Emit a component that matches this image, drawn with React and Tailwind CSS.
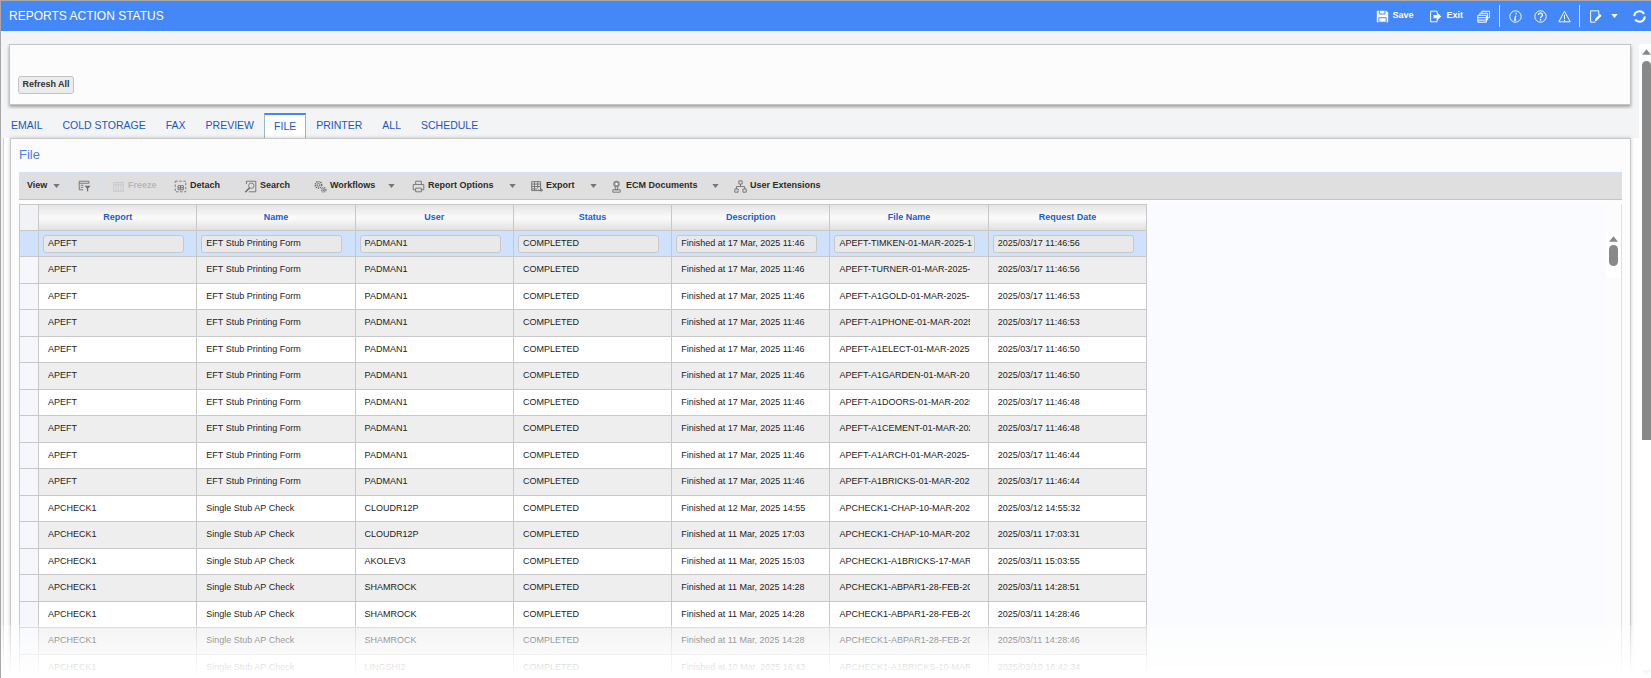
const columns = ['Report', 'Name', 'User', 'Status', 'Description', 'File Name', 'Request Date'];

const APEFT = ['APEFT', 'EFT Stub Printing Form', 'PADMAN1', 'COMPLETED'];
const rows = [
  [...APEFT, 'Finished at 17 Mar, 2025 11:46', 'APEFT-TIMKEN-01-MAR-2025-1', '2025/03/17 11:46:56'],
  [...APEFT, 'Finished at 17 Mar, 2025 11:46', 'APEFT-TURNER-01-MAR-2025-', '2025/03/17 11:46:56'],
  [...APEFT, 'Finished at 17 Mar, 2025 11:46', 'APEFT-A1GOLD-01-MAR-2025-', '2025/03/17 11:46:53'],
  [...APEFT, 'Finished at 17 Mar, 2025 11:46', 'APEFT-A1PHONE-01-MAR-2025', '2025/03/17 11:46:53'],
  [...APEFT, 'Finished at 17 Mar, 2025 11:46', 'APEFT-A1ELECT-01-MAR-2025-', '2025/03/17 11:46:50'],
  [...APEFT, 'Finished at 17 Mar, 2025 11:46', 'APEFT-A1GARDEN-01-MAR-202', '2025/03/17 11:46:50'],
  [...APEFT, 'Finished at 17 Mar, 2025 11:46', 'APEFT-A1DOORS-01-MAR-2025', '2025/03/17 11:46:48'],
  [...APEFT, 'Finished at 17 Mar, 2025 11:46', 'APEFT-A1CEMENT-01-MAR-202', '2025/03/17 11:46:48'],
  [...APEFT, 'Finished at 17 Mar, 2025 11:46', 'APEFT-A1ARCH-01-MAR-2025-', '2025/03/17 11:46:44'],
  [...APEFT, 'Finished at 17 Mar, 2025 11:46', 'APEFT-A1BRICKS-01-MAR-2025', '2025/03/17 11:46:44'],
  ['APCHECK1', 'Single Stub AP Check', 'CLOUDR12P', 'COMPLETED', 'Finished at 12 Mar, 2025 14:55', 'APCHECK1-CHAP-10-MAR-202', '2025/03/12 14:55:32'],
  ['APCHECK1', 'Single Stub AP Check', 'CLOUDR12P', 'COMPLETED', 'Finished at 11 Mar, 2025 17:03', 'APCHECK1-CHAP-10-MAR-202', '2025/03/11 17:03:31'],
  ['APCHECK1', 'Single Stub AP Check', 'AKOLEV3', 'COMPLETED', 'Finished at 11 Mar, 2025 15:03', 'APCHECK1-A1BRICKS-17-MAR', '2025/03/11 15:03:55'],
  ['APCHECK1', 'Single Stub AP Check', 'SHAMROCK', 'COMPLETED', 'Finished at 11 Mar, 2025 14:28', 'APCHECK1-ABPAR1-28-FEB-20', '2025/03/11 14:28:51'],
  ['APCHECK1', 'Single Stub AP Check', 'SHAMROCK', 'COMPLETED', 'Finished at 11 Mar, 2025 14:28', 'APCHECK1-ABPAR1-28-FEB-20', '2025/03/11 14:28:46'],
  ['APCHECK1', 'Single Stub AP Check', 'SHAMROCK', 'COMPLETED', 'Finished at 11 Mar, 2025 14:28', 'APCHECK1-ABPAR1-28-FEB-20', '2025/03/11 14:28:46'],
  ['APCHECK1', 'Single Stub AP Check', 'LINGSHI2', 'COMPLETED', 'Finished at 10 Mar, 2025 16:43', 'APCHECK1-A1BRICKS-10-MAR', '2025/03/10 16:42:34'],
];

const tabs = ['EMAIL', 'COLD STORAGE', 'FAX', 'PREVIEW', 'FILE', 'PRINTER', 'ALL', 'SCHEDULE'];

function Caret({ className = '' }) {
  return (
    <svg width="7" height="4" viewBox="0 0 8 5" className={`shrink-0 ${className}`}>
      <path d="M0 0h8L4 5z" fill="currentColor" />
    </svg>
  );
}

function ToolIcon({ children, dim }) {
  return (
    <svg
      width="13"
      height="13"
      viewBox="0 0 16 16"
      fill="none"
      stroke="currentColor"
      strokeWidth="1.1"
      className={`shrink-0 ${dim ? 'text-[#c8c8c8]' : 'text-[#6e6e6e]'}`}
    >
      {children}
    </svg>
  );
}

function HeadIcon({ children }) {
  return (
    <svg width="13" height="13" viewBox="0 0 16 16" fill="none" stroke="white" strokeWidth="1.2" className="shrink-0">
      {children}
    </svg>
  );
}

function HeaderBar() {
  return (
    <div className="flex h-[30px] items-center justify-between bg-[#4487f6] pl-[8px] pr-[5px] text-white">
      <span className="text-[12px]">REPORTS ACTION STATUS</span>
      <div className="flex items-center">
        <div className="flex items-center gap-[3px] text-[9px] font-bold">
          <HeadIcon>
            <path d="M1 1h11.500L15 3.500V15H1z" fill="white" stroke="none" />
            <path d="M4 1v4h7V1M3.500 9.500h9V15h-9z" stroke="#4487f6" />
          </HeadIcon>
          <span>Save</span>
        </div>
        <div className="ml-[16px] flex items-center gap-[4px] text-[9px] font-bold">
          <HeadIcon>
            <path d="M10 5V1.500H2v13h8V11" />
            <path d="M5.500 6h4.500V3l5 5-5 5v-3H5.500z" fill="white" stroke="none" />
          </HeadIcon>
          <span>Exit</span>
        </div>
        <div className="ml-[14px]">
          <HeadIcon>
            <path d="M1 6.500h10.500V15H1zM1 9.500h10.500M1 12.500h10.500M3.500 6.500V4H13v8h-1.500M6 4V1.500h9.500V9.500H13" />
          </HeadIcon>
        </div>
        <div className="ml-[9px] h-[22px] w-px bg-white/80" />
        <div className="ml-[9px]">
          <HeadIcon>
            <circle cx="8" cy="8" r="7" />
            <path d="M8.800 3.500v1.800M8.300 6.800l-1.300 5.500h1.800" strokeWidth="1.600" />
          </HeadIcon>
        </div>
        <div className="ml-[12px]">
          <HeadIcon>
            <circle cx="8" cy="8" r="7" />
            <path d="M5.500 6.200c0-3.200 5-3.200 5 0 0 2-2.500 1.800-2.500 3.800M8 11v1.800" strokeWidth="1.600" />
          </HeadIcon>
        </div>
        <div className="ml-[11px]">
          <HeadIcon>
            <path d="M8 1.500l7 13H1zM8 6v5M8 12v1.500" />
          </HeadIcon>
        </div>
        <div className="ml-[8px] h-[22px] w-px bg-white/80" />
        <div className="ml-[9px]">
          <HeadIcon>
            <path d="M12 6V1H2v14h6" />
            <path d="M7 14l1-3.500L13.500 5l2 2L10 12.500z" fill="white" stroke="none" />
          </HeadIcon>
        </div>
        <Caret className="ml-[9px] text-white" />
        <div className="ml-[15px]">
          <HeadIcon>
            <circle cx="8" cy="8" r="6.500" strokeWidth="2.600" strokeDasharray="16 4.400" />
          </HeadIcon>
        </div>
      </div>
    </div>
  );
}

function Toolbar() {
  return (
    <div className="flex h-[28px] items-center whitespace-nowrap border-t border-b border-t-[#d4e3f5] border-b-[#c4c4c4] bg-[#dfdfdf] text-[9px] font-bold text-[#2c2c2c]">
      <div className="flex h-full w-[49px] shrink-0 items-center pl-[8px]">
        <span>View</span>
        <Caret className="ml-[6px] text-[#777]" />
      </div>
      <div className="flex h-full w-[32px] shrink-0 items-center justify-center border-l border-[#d6e2ee]">
        <ToolIcon>
          <path d="M1.500 1.500h12v2.500h-12zM1.500 4v8h5M3.500 6.500h3M3.500 9h3" />
          <path d="M8 7h7.500l-3 3.500v4l-1.500-1v-3z" fill="currentColor" stroke="none" />
        </ToolIcon>
      </div>
      <div className="flex h-full w-[71px] shrink-0 items-center gap-[3px] border-l border-[#d6e2ee] pl-[11px] text-[#b8b8b8]">
        <ToolIcon dim>
          <path d="M2 3v11M5 3v11M8 3v11M11 3v11M14 3v11M2 3h12M2 6h12M2 14h12" />
        </ToolIcon>
        <span>Freeze</span>
      </div>
      <div className="flex h-full w-[60px] shrink-0 items-center gap-[3px] pl-[3px]">
        <ToolIcon>
          <path d="M1.500 1.500h13v13h-13z" strokeDasharray="3 2" />
          <path d="M5 7h6.500v5H5zM8 7v5M5 9.500h6.500" />
        </ToolIcon>
        <span>Detach</span>
      </div>
      <div className="flex h-full w-[70px] shrink-0 items-center gap-[3px] border-l border-[#d6e2ee] pl-[12px]">
        <ToolIcon>
          <path d="M3 5V1.500h11.500v13H6" />
          <circle cx="9" cy="7" r="3.300" />
          <path d="M6.800 9.700L1.500 15" strokeWidth="1.800" />
        </ToolIcon>
        <span>Search</span>
      </div>
      <div className="flex h-full w-[107px] shrink-0 items-center gap-[3px] border-l border-[#d6e2ee] pl-[12px]">
        <ToolIcon>
          <circle cx="5.500" cy="6" r="4" strokeWidth="1.800" strokeDasharray="1.600 1" />
          <circle cx="5.500" cy="6" r="1.800" />
          <circle cx="12" cy="12" r="2.700" strokeWidth="1.500" strokeDasharray="1.200 0.800" />
          <circle cx="12" cy="12" r="1" />
        </ToolIcon>
        <span>Workflows</span>
        <Caret className="ml-[10px] text-[#777]" />
      </div>
      <div className="flex h-full w-[118px] shrink-0 items-center gap-[3px] pl-[4px]">
        <ToolIcon>
          <path d="M4.500 5V1.500h7V5M4.500 12H1.500V5.500h13V12h-3M4.500 10h7v4.500h-7z" />
        </ToolIcon>
        <span>Report Options</span>
        <Caret className="ml-[12px] text-[#777]" />
      </div>
      <div className="flex h-full w-[80px] shrink-0 items-center gap-[3px] pl-[4px]">
        <ToolIcon>
          <path d="M2 2h11v11H2zM2 5h11M2 8h11M2 11h7M5.500 2v11M9.500 2v8" />
          <path d="M10 12.500h5.500M13 10.500l2.500 2-2.500 2" />
        </ToolIcon>
        <span>Export</span>
        <Caret className="ml-[12px] text-[#777]" />
      </div>
      <div className="flex h-full w-[124px] shrink-0 items-center gap-[3px] pl-[4px]">
        <ToolIcon>
          <circle cx="8" cy="5" r="4" fill="#8a8a8a" stroke="none" />
          <circle cx="8" cy="5" r="1.500" fill="white" stroke="none" />
          <path d="M6.500 8.500v3.500h3V8.500M3.500 12h9v3h-9z" />
        </ToolIcon>
        <span>ECM Documents</span>
        <Caret className="ml-[11px] text-[#777]" />
      </div>
      <div className="flex h-full items-center gap-[3px] pl-[4px]">
        <ToolIcon>
          <path d="M6 1h4v4H6zM1 11h4v4H1zM11 11h4v4h-4zM8 5v3M3 11V8h10v3" />
        </ToolIcon>
        <span>User Extensions</span>
      </div>
    </div>
  );
}

function DataRow({ row, index }) {
  const selected = index === 0;
  const gray = index % 2 === 1;
  const rowClass = selected ? 'h-[26px] bg-[#d0e1fb]' : gray ? 'h-[27px] bg-[#eeeeee]' : 'h-[26px] bg-white';
  return (
    <tr className={rowClass}>
      <td className={`border border-[#c8c8c8] ${selected ? 'bg-[#d0e1fb]' : 'bg-[#f5f7fc]'}`} />
      {row.map((cell, i) => (
        <td key={i} className="overflow-hidden border border-[#c8c8c8] px-[4px] text-left">
          {selected ? (
            <div className="flex h-[18px] w-[141px] items-center overflow-hidden whitespace-nowrap rounded-[3px] border border-[#c8c8c8] bg-[#e9e9e9] px-[4px]">
              {cell}
            </div>
          ) : (
            <div className="w-[136px] overflow-hidden whitespace-nowrap pl-[5px]">{cell}</div>
          )}
        </td>
      ))}
    </tr>
  );
}

export default function App() {
  return (
    <div
      className="relative h-[678px] w-[1651px] overflow-hidden border-t border-l border-[#a8a8a8] bg-[#f3f4f6] text-[#1c1c1c]"
      style={{ fontFamily: '"Liberation Sans", Arial, sans-serif' }}
    >
      <HeaderBar />

      <div className="pl-[8px]">
        {/* Actions panel */}
        <div className="mt-[13px] flex h-[61px] w-[1622px] items-end border border-[#c4c4c4] bg-[#fcfcfc] pb-[10px] pl-[8px] shadow-[0_2px_3px_rgba(0,0,0,0.35)]">
          <button className="h-[18px] w-[56px] whitespace-nowrap rounded-[3px] border border-[#c4c4c4] bg-[#ececec] text-[9px] font-bold text-[#333]">
            Refresh All
          </button>
        </div>

        {/* Tabs */}
        <div className="mt-[8px] flex h-[25px] items-stretch text-[10.5px] text-[#2157c4]">
          {tabs.map((tab) =>
            tab === 'FILE' ? (
              <div
                key={tab}
                className="flex items-center border-x border-t-2 border-x-[#9db3cc] border-t-[#4487f6] bg-white px-[9px]"
              >
                {tab}
              </div>
            ) : (
              <div key={tab} className="flex items-center px-[10px] first:pl-[2px]">
                {tab}
              </div>
            )
          )}
        </div>
      </div>

      {/* Tab body */}
      <div className="ml-[2px] h-[540px] w-[1636px] border-l border-[#d4d4d4] bg-white pl-[6px]">
        <div className="relative h-[540px] w-[1621px] border border-[#c8c8c8] bg-[#fcfcfc] px-[8px] shadow-[0_0_4px_rgba(0,0,0,0.2)]">
          <div className="flex h-[33px] items-center pb-[2px] text-[13px] text-[#4d7cf0]">File</div>
          <Toolbar />
          <div className="mt-[4px] flex h-[480px]">
            <div className="flex-1 bg-[#fafbfe]">
              <table className="w-[1127px] table-fixed border-collapse bg-white text-[9px] text-[#1c1c1c]">
                <colgroup>
                  <col className="w-[19px]" />
                  {columns.map((c) => (
                    <col key={c} className="w-[158.3px]" />
                  ))}
                </colgroup>
                <thead>
                  <tr className="h-[26px] bg-gradient-to-b from-[#e4e4e4] via-[#fbfbfb] to-[#dedede]">
                    <th className="border border-[#c8c8c8] bg-[#f1f2f5]" />
                    {columns.map((c) => (
                      <th key={c} className="border border-[#c8c8c8] font-bold text-[#1d5cc8]">
                        {c}
                      </th>
                    ))}
                  </tr>
                </thead>
                <tbody>
                  {rows.map((row, i) => (
                    <DataRow key={i} row={row} index={i} />
                  ))}
                </tbody>
              </table>
            </div>
            <div className="w-[16px] border-r border-[#d4e3f5] bg-[#fcfcfc]">
              <div className="mt-[28px] flex h-[46px] w-[15px] flex-col items-center bg-white pt-[4px]">
                <Caret className="h-[6px] w-[9px] rotate-180 text-[#888]" />
                <div className="mt-[3px] h-[21px] w-[9px] rounded-[5px] bg-[#888]" />
              </div>
            </div>
          </div>
        </div>
      </div>

      {/* page scrollbar */}
      <div className="absolute right-0 top-[43px] flex h-[634px] w-[12px] flex-col items-end bg-white">
        <Caret className="mt-[5px] h-[6px] w-[9px] rotate-180 text-[#888]" />
        <div className="mt-[6px] h-[379px] w-[9px] rounded-t-[5px] bg-[#888]" />
        <Caret className="mb-[2px] mt-auto h-[6px] w-[9px] text-[#888]" />
      </div>

      {/* bottom fade */}
      <div className="absolute bottom-0 left-0 h-[53px] w-full bg-gradient-to-b from-white/30 via-white/70 to-white" />
    </div>
  );
}
